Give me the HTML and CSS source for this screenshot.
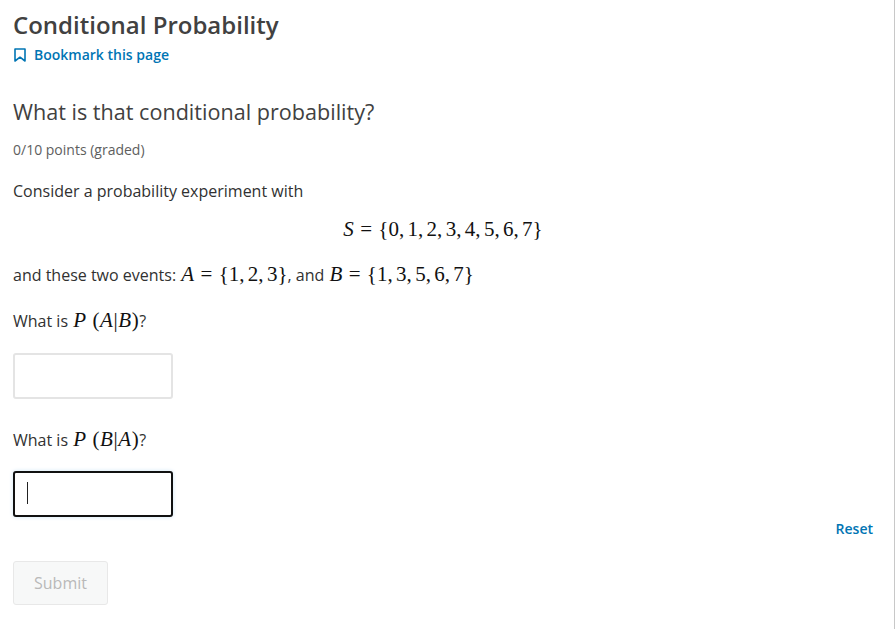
FILE: index.html
```html
<!DOCTYPE html>
<html lang="en">
<head>
    <meta charset="UTF-8">
    <meta name="viewport" content="width=device-width, initial-scale=1.0">
    <title>Conditional Probability</title>
    <link rel="stylesheet" href="styles.css">
</head>
<body>

<div class="page">
    <!-- Unit header -->
    <h1 class="unit-title">Conditional Probability</h1>
    <a class="bookmark" href="#">
        <svg class="bookmark-icon" width="12" height="14" viewBox="0 0 12 14" aria-hidden="true">
            <path d="M1 1h10v12l-5-3.8-5 3.8z" fill="none" stroke="#0075b4" stroke-width="1.6" stroke-linejoin="round"/>
        </svg>
        Bookmark this page
    </a>

    <!-- Problem -->
    <h2 class="problem-title">What is that conditional probability?</h2>
    <div class="points">0/10 points (graded)</div>

    <p class="text first-text">Consider a probability experiment with</p>
    <div class="math-block"><span class="math"><i>S</i> <span class="rel">=</span> {0, 1, 2, 3, 4, 5, 6, 7}</span></div>
    <p class="text events">and these two events: <span class="math big"><i>A</i> <span class="rel">=</span> {1, 2, 3}</span>, and <span class="math big"><i>B</i> <span class="rel">=</span> {1, 3, 5, 6, 7}</span></p>

    <p class="text question">What is <span class="math big wide"><i>P</i> (<i>A</i>|<i>B</i>)</span>?</p>
    <input class="answer" type="text" aria-label="P(A|B)">

    <p class="text question second">What is <span class="math big wide"><i>P</i> (<i>B</i>|<i>A</i>)</span>?</p>
    <div class="answer-wrap">
        <input class="answer focused" type="text" aria-label="P(B|A)">
        <span class="caret"></span>
    </div>

    <div class="reset-row"><a class="reset" href="#">Reset</a></div>
    <button class="submit" type="button" disabled>Submit</button>
</div>

</body>
</html>
```

FILE: styles.css
```css
/* Reset and general styling */
* {
    margin: 0;
    padding: 0;
    box-sizing: border-box;
}

body {
    font-family: "Open Sans", Arial, sans-serif;
    background-color: #fff;
    color: #414141;
    overflow: hidden;
}

.page {
    height: 629px;
    padding: 9px 21px 0 13px;
    border-right: 1px solid #c8c8c8;
}

a {
    color: #0075b4;
    text-decoration: none;
}

.unit-title {
    font-size: 24px;
    font-weight: 600;
    line-height: 32px;
    color: #414141;
}

.bookmark {
    display: flex;
    align-items: center;
    gap: 8px;
    margin-top: 4px;
    font-size: 14px;
    font-weight: 600;
    line-height: 20px;
}

.bookmark-icon {
    margin-left: 1px;
}

.problem-title {
    margin-top: 31px;
    font-size: 21.6px;
    font-weight: 400;
    line-height: 32px;
    color: #414141;
}

.points {
    margin-top: 12px;
    font-size: 14px;
    line-height: 20px;
    color: #5e5e5e;
}

.text {
    font-size: 16px;
    line-height: 22px;
    color: #313131;
}

.first-text {
    margin-top: 20px;
}

.math-block {
    margin-top: 13px;
    height: 26px;
    text-align: center;
    font-size: 21px;
    line-height: 26px;
}

.math {
    font-family: "Liberation Serif", "Times New Roman", serif;
    color: #111;
    word-spacing: -1.9px;
}

.math.big {
    margin-left: 1px;
    font-size: 21px;
}

.math.wide {
    word-spacing: 0;
    letter-spacing: 0.6px;
}

.rel {
    margin: 0 3px;
}

.events {
    margin-top: 20px;
    line-height: 26px;
}

.question {
    margin-top: 19px;
    line-height: 26px;
}

.question.second {
    margin-top: 27px;
}

.answer {
    display: block;
    width: 160px;
    height: 46px;
    margin-top: 19px;
    background-color: #fff;
    border: 2px solid #e4e4e4;
    border-radius: 3px;
    outline: none;
}

.answer-wrap {
    position: relative;
    width: 160px;
    margin-top: 18px;
}

.answer.focused {
    margin-top: 0;
    border-color: #111;
    box-shadow: 0 0 4px #cfe6f5;
}

.caret {
    position: absolute;
    left: 14px;
    top: 11px;
    width: 1px;
    height: 22px;
    background-color: #222;
}

.reset-row {
    display: flex;
    justify-content: flex-end;
    margin-top: 2px;
    font-size: 14px;
    font-weight: 600;
    line-height: 20px;
}

.submit {
    display: block;
    width: 95px;
    height: 44px;
    margin-top: 22px;
    font-family: inherit;
    font-size: 16px;
    color: #b9b9b9;
    background-color: #f7f8f8;
    border: 1px solid #e8e8e8;
    border-radius: 3px;
}
```
